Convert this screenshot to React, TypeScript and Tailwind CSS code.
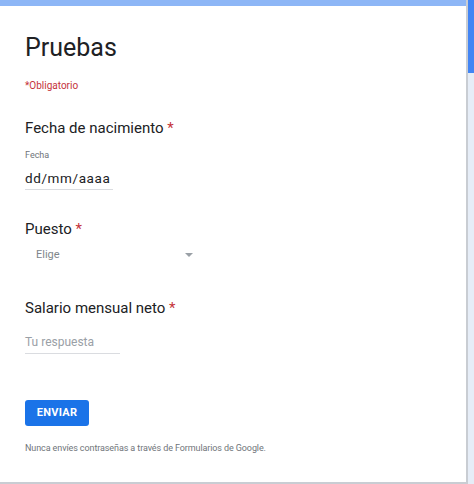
export default function App() {
  return (
    <div
      className="flex h-[484px] w-full overflow-hidden bg-white"
      style={{ fontFamily: "Roboto, 'Liberation Sans', sans-serif" }}
    >
      <div className="flex flex-1 flex-col border-r-2 border-b-2 border-[#c9cdd3]">
        <div className="h-[6px] bg-[#8db6f6]" />
        <div className="flex flex-1 flex-col px-[25px]">
          <h1 className="mt-[24px] text-[25px] leading-[36px] text-[#202124]">Pruebas</h1>
          <p className="mt-[13px] text-[10px] leading-[14px] text-[#c5333a]">*Obligatorio</p>

          <div className="mt-[24px]">
            <p className="text-[15px] leading-[22px] text-[#202124]">
              Fecha de nacimiento <span className="text-[#c5333a]">*</span>
            </p>
            <p className="mt-[10px] text-[9px] leading-[12px] text-[#70757a]">Fecha</p>
            <div className="mt-[8px] w-[88px] border-b border-[#dadce0] pb-[1px] text-[13.5px] leading-[19px] tracking-[0.6px] text-[#202124]">
              dd/mm/aaaa
            </div>
          </div>

          <div className="mt-[28px]">
            <p className="text-[15px] leading-[22px] text-[#202124]">
              Puesto <span className="text-[#c5333a]">*</span>
            </p>
            <div className="mt-[7px] flex w-[170px] items-center justify-between pl-[11px] pr-[2px]">
              <span className="text-[11px] leading-[16px] text-[#80868b]">Elige</span>
              <span className="h-0 w-0 border-x-[4px] border-t-[4px] border-x-transparent border-t-[#9aa0a6]" />
            </div>
          </div>

          <div className="mt-[34px]">
            <p className="text-[15px] leading-[22px] text-[#202124]">
              Salario mensual neto <span className="text-[#c5333a]">*</span>
            </p>
            <div className="mt-[14px] w-[95px] border-b border-[#dadce0] pb-[2px] text-[12px] leading-[18px] text-[#9aa0a6]">
              Tu respuesta
            </div>
          </div>

          <button className="mt-[46px] h-[26px] w-[64px] rounded-[3px] bg-[#1a73e8] text-[11px] font-bold tracking-[0.3px] text-white">
            ENVIAR
          </button>
          <p className="mt-[16px] text-[9px] leading-[12px] tracking-[-0.1px] text-[#70757a]">
            Nunca envíes contraseñas a través de Formularios de Google.
          </p>
        </div>
      </div>
      <div className="flex w-[6px] flex-col bg-[#e6edf7]">
        <div className="h-[73px] bg-[#4285f4]" />
      </div>
    </div>
  );
}
